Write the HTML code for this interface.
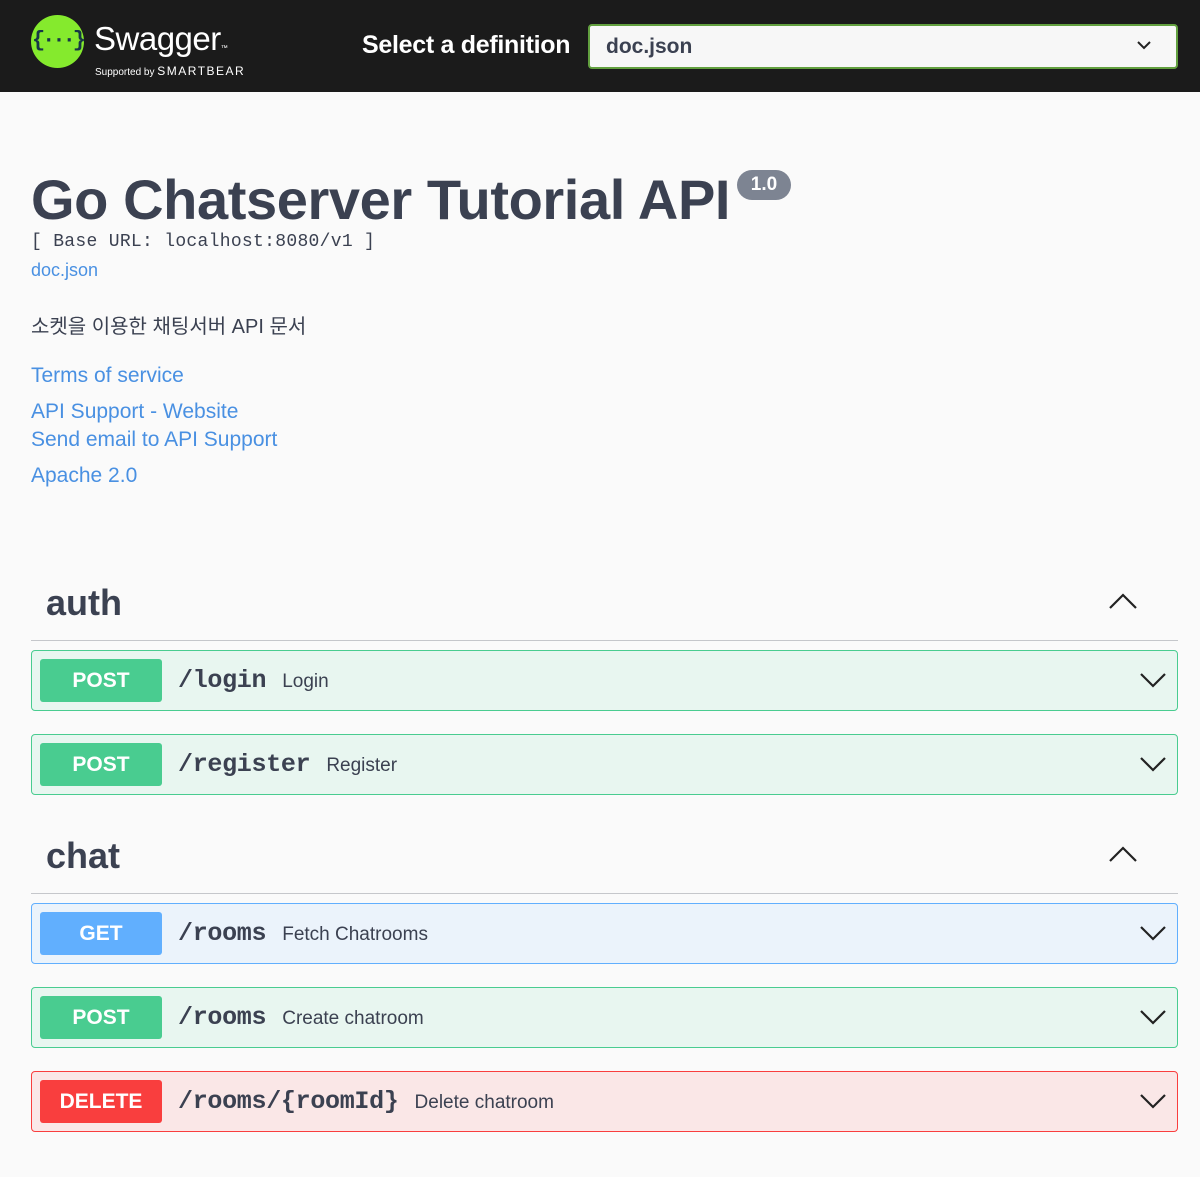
<!DOCTYPE html>
<html><head><meta charset="utf-8"><style>
*{margin:0;padding:0;box-sizing:border-box}
body{width:1200px;height:1177px;background:#fafafa;font-family:"Liberation Sans","Noto Sans CJK KR",sans-serif;color:#3b4151;position:relative;overflow:hidden}
.top{position:absolute;left:0;top:0;width:1200px;height:92px;background:#1b1b1b}
.logo{position:absolute;left:31px;top:15px;width:53px;height:53px;border-radius:50%;background:#85ea2d;color:#173647;font:bold 22px "Liberation Mono",monospace;text-align:center;line-height:51px;letter-spacing:-3px}
.sw{position:absolute;left:94px;top:20px;color:#fff;font-size:33px;letter-spacing:-0.5px}
.sb{position:absolute;left:95px;top:64px;color:#fff;font-size:10px}
.sb b{font-size:12px;letter-spacing:1.5px;font-weight:normal}
.sel{position:absolute;left:362px;top:31px;color:#fff;font-weight:bold;font-size:25px;letter-spacing:-0.3px}
.box{position:absolute;left:588px;top:24px;width:590px;height:45px;background:#f7f7f7;border:2px solid #62a03f;border-radius:4px;font-weight:bold;font-size:21px;padding:9px 16px;color:#3b4151}
.box svg{position:absolute;right:24px;top:14px}
a{color:#4990e2;text-decoration:none}
.abs{position:absolute}
h1{position:absolute;left:31px;top:167px;font-size:56px;font-weight:bold;letter-spacing:-0.4px;color:#3b4151}
.ver{position:absolute;left:737px;top:170px;width:54px;height:30px;border-radius:15px;background:#7d8492;color:#fff;font-weight:bold;font-size:19px;text-align:center;line-height:30px}
.mono{font-family:"Liberation Mono",monospace}
.tag{position:absolute;left:31px;width:1147px;height:62px;border-bottom:1px solid #c5c7cb}
.tag span{position:absolute;left:15px;top:3px;font-size:36px;font-weight:bold}
.tag svg{position:absolute;right:40px;top:13px}
.op{position:absolute;left:31px;width:1147px;height:61px;border:1.5px solid;border-radius:4px}
.op .m{position:absolute;left:8px;top:8px;width:122px;height:43px;border-radius:3px;color:#fff;font-weight:bold;font-size:21px;text-align:center;line-height:43px}
.op .p{position:absolute;left:146px;top:15px;font:bold 25px "Liberation Mono",monospace;color:#3b4151;letter-spacing:-0.3px}
.op .d{font:19px "Liberation Sans",sans-serif;margin-left:16px;letter-spacing:0;color:#3b4151}
.op svg{position:absolute;right:10px;top:20px}
.post{background:#e8f6f0;border-color:#49cc90}.post .m{background:#49cc90}
.get{background:#ebf3fb;border-color:#61affe}.get .m{background:#61affe}
.del{background:#fae7e7;border-color:#f93e3e}.del .m{background:#f93e3e}
</style></head><body>
<div class="top">
<div class="logo">{···}</div>
<div class="sw">Swagger<span style="font-size:7px">™</span></div>
<div class="sb">Supported by <b>SMARTBEAR</b></div>
<div class="sel">Select a definition</div>
<div class="box">doc.json<svg width="16" height="10" viewBox="0 0 16 10"><path d="M2 2l6 6 6-6" stroke="#222" stroke-width="2" fill="none"/></svg></div>
</div>
<h1>Go Chatserver Tutorial API</h1>
<div class="ver">1.0</div>
<div class="abs mono" style="left:31px;top:232px;font-size:18px;color:#3b4151;letter-spacing:0.3px">[ Base URL: localhost:8080/v1 ]</div>
<div class="abs" style="left:31px;top:260px;font-size:18px"><a>doc.json</a></div>
<div class="abs" style="left:31px;top:310px;font-size:20px">소켓을 이용한 채팅서버 API 문서</div>
<div class="abs" style="left:31px;top:364px;font-size:21px"><a>Terms of service</a></div>
<div class="abs" style="left:31px;top:400px;font-size:21px"><a>API Support - Website</a></div>
<div class="abs" style="left:31px;top:428px;font-size:21px"><a>Send email to API Support</a></div>
<div class="abs" style="left:31px;top:464px;font-size:21px"><a>Apache 2.0</a></div>

<div class="tag" style="top:579px"><span>auth</span><svg width="30" height="18" viewBox="0 0 30 18"><path d="M2 16L15 3l13 13" stroke="#222" stroke-width="2.2" fill="none"/></svg></div>
<div class="op post" style="top:650px"><div class="m">POST</div><div class="p">/login<span class="d">Login</span></div><svg width="28" height="18" viewBox="0 0 28 18"><path d="M2 3l12 12 12-12" stroke="#222" stroke-width="2.2" fill="none"/></svg></div>
<div class="op post" style="top:734px"><div class="m">POST</div><div class="p">/register<span class="d">Register</span></div><svg width="28" height="18" viewBox="0 0 28 18"><path d="M2 3l12 12 12-12" stroke="#222" stroke-width="2.2" fill="none"/></svg></div>

<div class="tag" style="top:832px"><span>chat</span><svg width="30" height="18" viewBox="0 0 30 18"><path d="M2 16L15 3l13 13" stroke="#222" stroke-width="2.2" fill="none"/></svg></div>
<div class="op get" style="top:903px"><div class="m">GET</div><div class="p">/rooms<span class="d">Fetch Chatrooms</span></div><svg width="28" height="18" viewBox="0 0 28 18"><path d="M2 3l12 12 12-12" stroke="#222" stroke-width="2.2" fill="none"/></svg></div>
<div class="op post" style="top:987px"><div class="m">POST</div><div class="p">/rooms<span class="d">Create chatroom</span></div><svg width="28" height="18" viewBox="0 0 28 18"><path d="M2 3l12 12 12-12" stroke="#222" stroke-width="2.2" fill="none"/></svg></div>
<div class="op del" style="top:1071px"><div class="m">DELETE</div><div class="p">/rooms/{roomId}<span class="d">Delete chatroom</span></div><svg width="28" height="18" viewBox="0 0 28 18"><path d="M2 3l12 12 12-12" stroke="#222" stroke-width="2.2" fill="none"/></svg></div>
</body></html>
